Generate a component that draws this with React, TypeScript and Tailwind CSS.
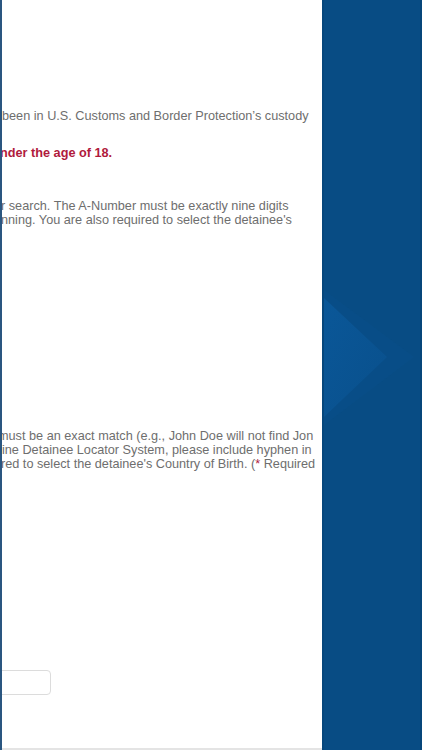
import React from 'react';

const GRAY = 'text-[#6e6e6e]';
const RED = 'text-[#b01a3c]';

function Line({ children, offset = '', className = '' }: { children: React.ReactNode; offset?: string; className?: string }) {
  return <div className={`whitespace-nowrap h-[14px] leading-[14px] ${offset} ${className}`}>{children}</div>;
}

function SidePanel() {
  return (
    <div className="relative w-[100px] h-full bg-[#084c84] border-l-2 border-[#07477c] border-r-2 border-r-[#07467a] overflow-hidden">
      <svg className="absolute left-0 top-[290px]" width="100" height="140" viewBox="0 0 100 140" aria-hidden>
        <defs>
          <linearGradient id="chev" x1="0" y1="0" x2="1" y2="1">
            <stop offset="0" stopColor="#0a5798" />
            <stop offset="1" stopColor="#09508c" />
          </linearGradient>
        </defs>
        <polygon points="0,0 90,67 0,135" fill="#094f8b" opacity="0.35" />
        <polygon points="0,8 63,67 0,127" fill="url(#chev)" />
      </svg>
    </div>
  );
}

export default function App() {
  return (
    <div className="flex w-[422px] h-[750px] bg-white" style={{ fontFamily: '"Liberation Sans", Arial, sans-serif' }}>
      <div className="w-[2px] h-full bg-[#2a5680]" />
      <div className="flex-1 h-full overflow-hidden border-b-2 border-[#e4e4e4] text-[12.7px]">
        <div className={`pt-[109px] ${GRAY}`}>
          <Line>been in U.S. Customs and Border Protection’s custody</Line>
        </div>
        <div className={`mt-[23px] font-bold ${RED}`}>
          <Line offset="-ml-[2px]">nder the age of 18.</Line>
        </div>
        <div className={`mt-[39px] ${GRAY}`}>
          <Line offset="-ml-[1px]">r search. The A-Number must be exactly nine digits</Line>
          <Line offset="-ml-[1px]">nning. You are also required to select the detainee's</Line>
        </div>
        <div className={`mt-[202px] ${GRAY}`}>
          <Line offset="-ml-[4px]">must be an exact match (e.g., John Doe will not find Jon</Line>
          <Line>ine Detainee Locator System, please include hyphen in</Line>
          <Line offset="-ml-[1px]">red to select the detainee's Country of Birth. (<span className={RED}>*</span> Required</Line>
        </div>
        <div className="mt-[199px] -ml-[100px] w-[149px] h-[25px] border border-[#dcdcdc] rounded-[4px]" />
      </div>
      <SidePanel />
    </div>
  );
}
